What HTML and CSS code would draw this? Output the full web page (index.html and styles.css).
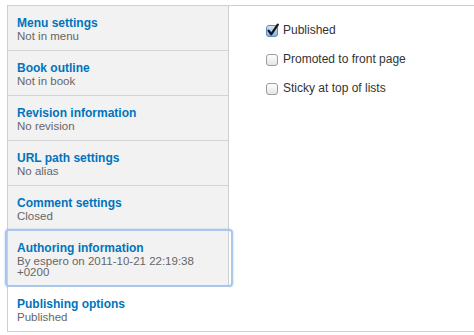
FILE: index.html
```html
<!DOCTYPE html>
<html>
<head>
<meta charset="utf-8">
<link rel="stylesheet" href="styles.css">
</head>
<body>
<div class="vtabs">
  <ul class="tabs">
    <li class="tab"><a class="title" href="#">Menu settings</a><span class="summary">Not in menu</span></li>
    <li class="tab"><a class="title" href="#">Book outline</a><span class="summary">Not in book</span></li>
    <li class="tab"><a class="title" href="#">Revision information</a><span class="summary">No revision</span></li>
    <li class="tab"><a class="title" href="#">URL path settings</a><span class="summary">No alias</span></li>
    <li class="tab"><a class="title" href="#">Comment settings</a><span class="summary">Closed</span></li>
    <li class="tab focus"><a class="title" href="#">Authoring information</a><span class="summary">By espero on 2011-10-21 22:19:38 +0200</span></li>
    <li class="tab selected"><a class="title" href="#">Publishing options</a><span class="summary">Published</span></li>
  </ul>
  <div class="pane">
    <label class="check">
      <svg class="box" width="13" height="13" viewBox="0 0 13 13">
        <defs>
          <linearGradient id="gb" x1="0" y1="0" x2="0" y2="1">
            <stop offset="0" stop-color="#d9e8fa"/>
            <stop offset="1" stop-color="#86aee3"/>
          </linearGradient>
        </defs>
        <rect x="0.5" y="1.5" width="11" height="11" rx="2.5" fill="url(#gb)" stroke="#5f87c0"/>
        <path d="M2.6 6.6 L5.3 10.2 L11.8 0.6" fill="none" stroke="#161616" stroke-width="2.3" stroke-linecap="round" stroke-linejoin="round"/>
      </svg>
      Published
    </label>
    <label class="check">
      <svg class="box" width="13" height="13" viewBox="0 0 13 13">
        <defs>
          <linearGradient id="gw" x1="0" y1="0" x2="0" y2="1">
            <stop offset="0" stop-color="#ffffff"/>
            <stop offset="1" stop-color="#e3e3e3"/>
          </linearGradient>
        </defs>
        <rect x="0.5" y="1.5" width="11" height="11" rx="2.5" fill="url(#gw)" stroke="#9c9c9c"/>
      </svg>
      Promoted to front page
    </label>
    <label class="check">
      <svg class="box" width="13" height="13" viewBox="0 0 13 13">
        <rect x="0.5" y="1.5" width="11" height="11" rx="2.5" fill="url(#gw)" stroke="#9c9c9c"/>
      </svg>
      Sticky at top of lists
    </label>
  </div>
</div>
</body>
</html>
```

FILE: styles.css
```css
html, body {
  margin: 0;
  padding: 0;
  background: #fff;
  overflow: hidden;
  font-family: "Liberation Sans", Arial, sans-serif;
}

.vtabs {
  display: flex;
  margin: 5px 0 0 7px;
  border: 1px solid #cfcfcf;
  border-right: none;
}

.tabs {
  list-style: none;
  margin: 0;
  padding: 0;
  width: 220px;
  flex: none;
  background: #f2f2f2;
  border-right: 1px solid #cfcfcf;
}

.tab {
  position: relative;
  padding: 9px 10px 8px 9px;
  border-bottom: 1px solid #d4d4d4;
}

.title {
  display: block;
  font-weight: bold;
  font-size: 12px;
  line-height: 16px;
  color: #0074bd;
  text-decoration: none;
}

.summary {
  display: block;
  font-size: 11.5px;
  line-height: 11px;
  color: #666;
}

.tab.selected {
  background: #fff;
  border-bottom: none;
  margin-right: -1px;
}

.tab.focus::after {
  content: "";
  position: absolute;
  top: -2px;
  bottom: -1px;
  left: -3px;
  right: -5px;
  border: 2px solid #a8c7ec;
  border-radius: 4px;
  box-shadow: 0 0 2px rgba(90, 145, 215, 0.55);
}

.pane {
  flex: 1;
  display: flex;
  flex-direction: column;
  gap: 15px;
  padding: 17px 0 0 37px;
}

.check {
  display: flex;
  align-items: center;
  height: 14px;
  font-size: 12px;
  color: #333;
}

.box {
  flex: none;
  margin-right: 4px;
  overflow: visible;
}
```
